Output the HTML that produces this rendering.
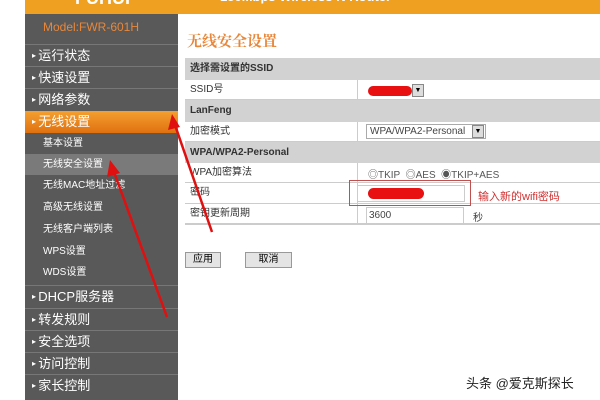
<!DOCTYPE html><html><head><meta charset="utf-8"><style>
*{margin:0;padding:0;box-sizing:border-box}
body{width:600px;height:400px;overflow:hidden;background:#fff;position:relative;font-family:"Liberation Sans","Noto Sans CJK SC",sans-serif}
.a{position:absolute}
.top{left:25px;top:0;width:575px;height:14px;background:#f0a020;overflow:hidden}
.side{left:25px;top:14px;width:153px;height:386px;background:#595959}
.m{position:absolute;left:0;width:153px;height:21px;color:#fff;font-size:13px;line-height:21px;padding-left:7px;border-top:1px solid #777}
.m:before{content:"▸ ";font-size:8px;vertical-align:2px}
.s{position:absolute;left:0;width:153px;height:21px;color:#fff;font-size:10px;line-height:21px;padding-left:18px}
.tr{position:absolute;left:185px;width:415px;font-size:10px;color:#333;padding-left:5px}
.h{background:#d2d2d2;font-weight:bold;color:#333}
.r{border-bottom:1px solid #ccc}
</style></head><body>
<div class="a top"><div class="a" style="left:50px;top:-12px;color:#fff;font-size:18px;font-weight:bold">FUHUI</div><div class="a" style="left:195px;top:-11px;color:#fff;font-size:13px;font-weight:bold">150Mbps Wireless N Router</div></div>
<div class="a side">
<div class="a" style="left:18px;top:6px;color:#e8873a;font-size:12px">Model:FWR-601H</div>
<div class="m" style="top:30px">运行状态</div>
<div class="m" style="top:52px">快速设置</div>
<div class="m" style="top:74px">网络参数</div>
<div class="m" style="top:97px;background:linear-gradient(#f4a030,#e07010);height:22px;border:none">无线设置</div>
<div class="s" style="top:119px">基本设置</div>
<div class="s" style="top:140px;background:#7a7a7a">无线安全设置</div>
<div class="s" style="top:161px">无线MAC地址过滤</div>
<div class="s" style="top:183px">高级无线设置</div>
<div class="s" style="top:205px">无线客户端列表</div>
<div class="s" style="top:227px">WPS设置</div>
<div class="s" style="top:248px">WDS设置</div>
<div class="m" style="top:271px">DHCP服务器</div>
<div class="m" style="top:294px">转发规则</div>
<div class="m" style="top:316px">安全选项</div>
<div class="m" style="top:338px">访问控制</div>
<div class="m" style="top:360px">家长控制</div>
</div>
<div class="a" style="left:187px;top:30px;color:#e8873a;font-size:15px;font-family:'Noto Serif CJK SC',serif;font-weight:bold">无线安全设置</div>
<div class="tr h" style="top:58px;height:22px;line-height:22px">选择需设置的SSID</div>
<div class="tr r" style="top:80px;height:20px;line-height:19px">SSID号</div>
<div class="tr h" style="top:100px;height:22px;line-height:22px">LanFeng</div>
<div class="tr r" style="top:122px;height:20px;line-height:19px">加密模式</div>
<div class="tr h" style="top:142px;height:21px;line-height:21px">WPA/WPA2-Personal</div>
<div class="tr r" style="top:163px;height:20px;line-height:19px">WPA加密算法</div>
<div class="tr r" style="top:183px;height:21px;line-height:20px">密码</div>
<div class="tr r" style="top:204px;height:21px;line-height:20px;border-bottom:2px solid #ccc">密钥更新周期</div>
<div class="a" style="left:357px;top:80px;width:1px;height:20px;background:#ccc"></div>
<div class="a" style="left:357px;top:122px;width:1px;height:20px;background:#ccc"></div>
<div class="a" style="left:357px;top:163px;width:1px;height:62px;background:#ccc"></div>
<div class="a" style="left:368px;top:86px;width:44px;height:10px;border-radius:6px;background:#e81010"></div>
<div class="a" style="left:412px;top:84px;width:12px;height:13px;border:1px solid #888;background:#ddd;font-size:7px;text-align:center;line-height:11px">▼</div>
<div class="a" style="left:366px;top:124px;width:120px;height:15px;border:1px solid #aaa;font-size:10px;line-height:13px;padding-left:3px;color:#444">WPA/WPA2-Personal</div>
<div class="a" style="left:472px;top:125px;width:12px;height:13px;border:1px solid #888;background:#ddd;font-size:7px;text-align:center;line-height:11px">▼</div>
<div class="a" style="left:368px;top:166px;font-size:10px;color:#555">◎TKIP &nbsp;◎AES &nbsp;◉TKIP+AES</div>
<div class="a" style="left:349px;top:180px;width:122px;height:26px;border:1px solid #c05050"></div>
<div class="a" style="left:357px;top:185px;width:108px;height:17px;border:1px solid #ccc"></div>
<div class="a" style="left:368px;top:188px;width:56px;height:11px;border-radius:6px;background:#e81010"></div>
<div class="a" style="left:478px;top:188px;font-size:11px;color:#d03030">输入新的wifi密码</div>
<div class="a" style="left:366px;top:207px;width:98px;height:17px;border:1px solid #ccc;font-size:10px;line-height:15px;padding-left:2px;color:#444">3600</div>
<div class="a" style="left:473px;top:209px;font-size:10px;color:#444">秒</div>
<div class="a" style="left:185px;top:252px;width:36px;height:16px;border:1px solid #999;background:#e4e4e4;font-size:10px;text-align:center;line-height:14px">应用</div>
<div class="a" style="left:245px;top:252px;width:47px;height:16px;border:1px solid #999;background:#e4e4e4;font-size:10px;text-align:center;line-height:14px">取消</div>
<div class="a" style="left:466px;top:373px;font-size:13px;color:#222">头条 @爱克斯探长</div>
<svg class="a" style="left:0;top:0" width="600" height="400">
<g stroke="#e01010" stroke-width="2.5" fill="#e01010">
<line x1="212" y1="232" x2="175" y2="125"/><polygon points="172,114 168,130 180,127" stroke="none"/>
<line x1="167" y1="317" x2="114" y2="172"/><polygon points="110,160 107,177 120,173" stroke="none"/>
</g></svg>
</body></html>
